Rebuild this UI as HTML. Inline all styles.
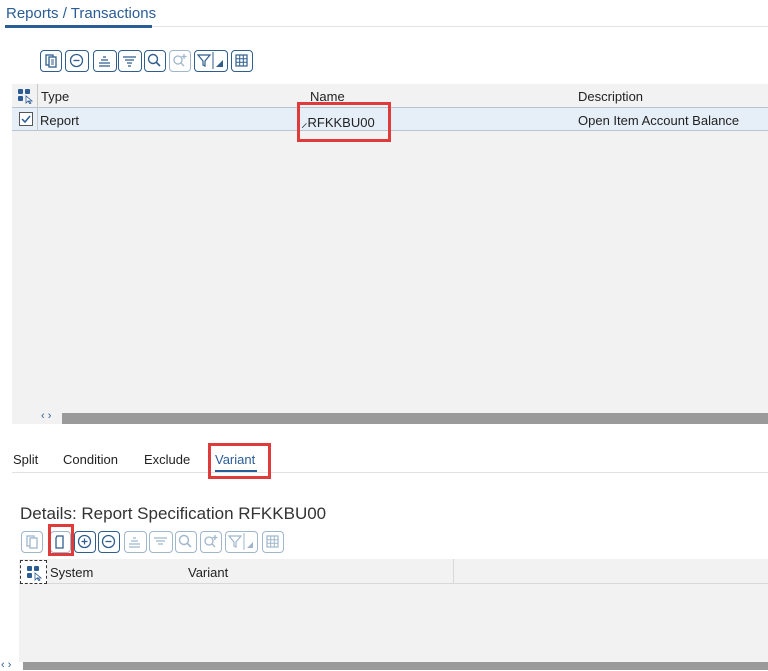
<!DOCTYPE html>
<html><head><style>
*{margin:0;padding:0;box-sizing:border-box}
body{width:768px;height:670px;background:#fff;font-family:"Liberation Sans",sans-serif;position:relative;overflow:hidden;color:#222}
.a{position:absolute}
.btn{position:absolute;height:22px;border:1.5px solid #2f5e8e;border-radius:4px;background:#fff}
.dis{border-color:#9fb6cc}
.btn svg{position:absolute;left:0;top:0}
.t{position:absolute;font-size:13px;white-space:nowrap}
.red{position:absolute;border:3px solid #e03b3b}
</style></head><body>
<div class="t" style="left:6px;top:5px;font-size:15px;color:#2a5c96">Reports / Transactions</div>
<div class="a" style="left:5px;top:26px;width:763px;height:1px;background:#e2e2e2"></div>
<div class="a" style="left:5px;top:25px;width:147px;height:3px;background:#2a5c96"></div>

<!-- toolbar 1 -->
<div class="btn" style="left:40px;top:50px;width:22px"><svg width="19" height="19"><rect x="5" y="4" width="7" height="10" fill="none" stroke="#2f5e8e" stroke-width="1.3"/><rect x="8" y="6" width="7" height="10" fill="#fff" stroke="#2f5e8e" stroke-width="1.3"/><path d="M10 9h3M10 11h3M10 13h3" stroke="#2f5e8e"/></svg></div>
<div class="btn" style="left:65px;top:50px;width:24px"><svg width="21" height="19"><circle cx="10.5" cy="9.5" r="6" fill="none" stroke="#2f5e8e" stroke-width="1.3"/><path d="M7.5 9.5h6" stroke="#2f5e8e" stroke-width="1.3"/></svg></div>
<div class="btn" style="left:93px;top:50px;width:24px"><svg width="21" height="19"><path d="M9 6h3M7 9h7M5 12h11M5 15h11" stroke="#2f5e8e" stroke-width="1.2"/></svg></div>
<div class="btn" style="left:118px;top:50px;width:24px"><svg width="21" height="19"><path d="M4 6h13M6 9h9M8 12h5M9 15h3" stroke="#2f5e8e" stroke-width="1.2"/></svg></div>
<div class="btn" style="left:144px;top:50px;width:22px"><svg width="19" height="19"><circle cx="8" cy="8" r="4.5" fill="none" stroke="#2f5e8e" stroke-width="1.4"/><path d="M11 11l4 4" stroke="#2f5e8e" stroke-width="1.6"/></svg></div>
<div class="btn dis" style="left:169px;top:50px;width:22px"><svg width="19" height="19"><circle cx="8" cy="9" r="4" fill="none" stroke="#9fb6cc" stroke-width="1.3"/><path d="M11 12l3 3M14 3v5M11.5 5.5h5" stroke="#9fb6cc" stroke-width="1.3"/></svg></div>
<div class="btn" style="left:194px;top:50px;width:34px"><svg width="31" height="19"><path d="M3 4h12l-5 6v5l-2-1v-4z" fill="none" stroke="#2f5e8e" stroke-width="1.2"/><path d="M18 1v17" stroke="#2f5e8e"/><path d="M21 16h7v-7z" fill="#2f5e8e"/></svg></div>
<div class="btn" style="left:231px;top:50px;width:22px"><svg width="19" height="19"><rect x="4" y="4" width="11" height="11" fill="none" stroke="#2f5e8e" stroke-width="1.2"/><path d="M4 7.7h11M4 11.3h11M7.7 4v11M11.3 4v11" stroke="#2f5e8e"/></svg></div>

<!-- table 1 -->
<div class="a" style="left:12px;top:84px;width:756px;height:340px;background:#f2f2f2"></div>
<div class="a" style="left:12px;top:107px;width:756px;height:24px;background:#e6eef8;border-top:1px solid #b8c4d0;border-bottom:1px solid #b8c4d0"></div>
<div class="a" style="left:37px;top:84px;width:1px;height:47px;background:#c8c8c8"></div>
<svg class="a" style="left:17px;top:88px" width="18" height="16"><rect x="1" y="1" width="5" height="5" rx="1" fill="#2a5c96"/><rect x="8" y="1" width="5" height="5" rx="1" fill="#2a5c96"/><rect x="1" y="8" width="5" height="5" rx="1" fill="#2a5c96"/><path d="M9 8v7l2-2 2 3 1-1-2-2h3z" fill="#fff" stroke="#2a5c96" stroke-width=".8"/></svg>
<div class="a" style="left:19px;top:112px;width:14px;height:14px;border:1px solid #555;background:#fff"></div>
<svg class="a" style="left:19px;top:112px" width="14" height="14"><path d="M3 7l3 3 5-6" stroke="#2a5c96" stroke-width="1.5" fill="none"/></svg>
<div class="t" style="left:41px;top:89px">Type</div>
<div class="t" style="left:310px;top:89px">Name</div>
<div class="t" style="left:578px;top:89px">Description</div>
<div class="t" style="left:40px;top:113px">Report</div>
<div class="t" style="left:301px;top:113px">⸝RFKKBU00</div>
<div class="t" style="left:578px;top:113px">Open Item Account Balance</div>
<div class="red" style="left:297px;top:102px;width:94px;height:40px"></div>
<div class="a" style="left:12px;top:413px;width:756px;height:11px;background:#f2f2f2"></div>
<div class="t" style="left:41px;top:410px;font-size:11px;color:#2a5c96">‹ ›</div>
<div class="a" style="left:62px;top:413px;width:706px;height:11px;background:#9a9a9a"></div>

<!-- tabs -->
<div class="t" style="left:13px;top:452px">Split</div>
<div class="t" style="left:63px;top:452px">Condition</div>
<div class="t" style="left:144px;top:452px">Exclude</div>
<div class="t" style="left:215px;top:452px;color:#2a5c96">Variant</div>
<div class="a" style="left:12px;top:472px;width:756px;height:1px;background:#e2e2e2"></div>
<div class="a" style="left:215px;top:470px;width:42px;height:2px;background:#2a5c96"></div>
<div class="red" style="left:208px;top:443px;width:63px;height:36px"></div>

<div class="t" style="left:20px;top:504px;font-size:17px;color:#333">Details: Report Specification RFKKBU00</div>

<!-- toolbar 2 -->
<div class="btn dis" style="left:21px;top:531px;width:22px"><svg width="19" height="19"><rect x="5" y="4" width="7" height="10" fill="none" stroke="#9fb6cc" stroke-width="1.3"/><rect x="8" y="6" width="7" height="10" fill="#fff" stroke="#9fb6cc" stroke-width="1.3"/></svg></div>
<div class="btn" style="left:50px;top:531px;width:21px;border-color:#9fb6cc"><svg width="18" height="19"><path d="M6 4h6v12H5V6z" fill="none" stroke="#2f5e8e" stroke-width="1.3"/></svg></div>
<div class="btn" style="left:74px;top:531px;width:22px"><svg width="19" height="19"><circle cx="9.5" cy="9.5" r="6" fill="none" stroke="#2f5e8e" stroke-width="1.3"/><path d="M6.5 9.5h6M9.5 6.5v6" stroke="#2f5e8e" stroke-width="1.3"/></svg></div>
<div class="btn" style="left:98px;top:531px;width:22px"><svg width="19" height="19"><circle cx="9.5" cy="9.5" r="6" fill="none" stroke="#2f5e8e" stroke-width="1.3"/><path d="M6.5 9.5h6" stroke="#2f5e8e" stroke-width="1.3"/></svg></div>
<div class="btn dis" style="left:124px;top:531px;width:23px"><svg width="20" height="19"><path d="M8 6h3M6 9h7M4 12h11M4 15h11" stroke="#9fb6cc" stroke-width="1.2"/></svg></div>
<div class="btn dis" style="left:149px;top:531px;width:24px"><svg width="21" height="19"><path d="M4 6h13M6 9h9M8 12h5" stroke="#9fb6cc" stroke-width="1.2"/></svg></div>
<div class="btn dis" style="left:175px;top:531px;width:22px"><svg width="19" height="19"><circle cx="8" cy="8" r="4.5" fill="none" stroke="#9fb6cc" stroke-width="1.4"/><path d="M11 11l4 4" stroke="#9fb6cc" stroke-width="1.6"/></svg></div>
<div class="btn dis" style="left:200px;top:531px;width:22px"><svg width="19" height="19"><circle cx="8" cy="9" r="4" fill="none" stroke="#9fb6cc" stroke-width="1.3"/><path d="M11 12l3 3M14 3v5M11.5 5.5h5" stroke="#9fb6cc" stroke-width="1.3"/></svg></div>
<div class="btn dis" style="left:225px;top:531px;width:33px"><svg width="30" height="19"><path d="M3 4h12l-5 6v5l-2-1v-4z" fill="none" stroke="#9fb6cc" stroke-width="1.2"/><path d="M18 1v17" stroke="#9fb6cc"/><path d="M21 16h6v-6z" fill="#9fb6cc"/></svg></div>
<div class="btn dis" style="left:262px;top:531px;width:22px"><svg width="19" height="19"><rect x="4" y="4" width="11" height="11" fill="none" stroke="#9fb6cc" stroke-width="1.2"/><path d="M4 7.7h11M4 11.3h11M7.7 4v11M11.3 4v11" stroke="#9fb6cc"/></svg></div>
<div class="red" style="left:48px;top:524px;width:26px;height:32px"></div>

<!-- table 2 -->
<div class="a" style="left:19px;top:559px;width:749px;height:103px;background:#f2f2f2"></div>
<div class="a" style="left:19px;top:583px;width:749px;height:1px;background:#d8d8d8"></div>
<div class="a" style="left:453px;top:559px;width:1px;height:24px;background:#d8d8d8"></div>
<div class="a" style="left:20px;top:560px;width:27px;height:24px;background:#fff;border:1px dashed #333"></div>
<svg class="a" style="left:26px;top:565px" width="18" height="16"><rect x="1" y="1" width="5" height="5" rx="1" fill="#2a5c96"/><rect x="8" y="1" width="5" height="5" rx="1" fill="#2a5c96"/><rect x="1" y="8" width="5" height="5" rx="1" fill="#2a5c96"/><path d="M9 8v7l2-2 2 3 1-1-2-2h3z" fill="#fff" stroke="#2a5c96" stroke-width=".8"/></svg>
<div class="t" style="left:50px;top:565px">System</div>
<div class="t" style="left:188px;top:565px">Variant</div>
<div class="t" style="left:1px;top:659px;font-size:11px;color:#2a5c96">‹ ›</div>
<div class="a" style="left:23px;top:662px;width:745px;height:8px;background:#9a9a9a"></div>
</body></html>
